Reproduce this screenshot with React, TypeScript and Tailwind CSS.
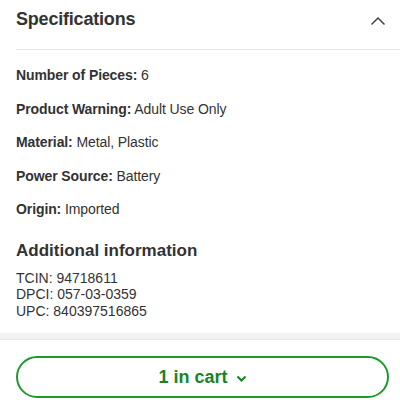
import React from "react";

const rows: [string, string][] = [
  ["Number of Pieces:", "6"],
  ["Product Warning:", "Adult Use Only"],
  ["Material:", "Metal, Plastic"],
  ["Power Source:", "Battery"],
  ["Origin:", "Imported"],
];

export default function App() {
  return (
    <div
      className="w-[400px] h-[400px] overflow-hidden bg-white text-[#333333]"
      style={{ fontFamily: '"Liberation Sans", Arial, sans-serif' }}
    >
      <div className="ml-[16px] h-[50px] border-b border-[#e4e4e4] flex items-start justify-between pt-[7px]">
        <div className="text-[18px] leading-[24px] font-bold tracking-[-0.2px] text-[#333333]">
          Specifications
        </div>
        <svg width="16" height="10" viewBox="0 0 16 10" className="mt-[9px] mr-[14px]">
          <path d="M1.5 8.5 L8 2 L14.5 8.5" fill="none" stroke="#444" strokeWidth="1.5" />
        </svg>
      </div>
      <div className="px-[16px] pt-[9px]">
        {rows.map(([k, v]) => (
          <div key={k} className="text-[14px] leading-[33.5px] tracking-[-0.1px]">
            <span className="font-bold">{k}</span> {v}
          </div>
        ))}
        <div className="mt-[12.5px] text-[17px] leading-[24px] font-bold">Additional information</div>
        <div className="mt-[6.5px] text-[14px] leading-[16.5px]">
          <div>TCIN: 94718611</div>
          <div>DPCI: 057-03-0359</div>
          <div>UPC: 840397516865</div>
        </div>
      </div>
      <div className="mt-[14px] h-[7px] bg-[#f2f2f2] border-b border-[#e6e6e6]"></div>
      <div className="pl-[16px] pr-[11px] pt-[16px]">
        <button className="w-full h-[42px] rounded-full border-2 border-[#1f9a2a] flex items-center justify-center gap-[8px] text-[#17851f]">
          <span className="text-[18px] font-bold">1 in cart</span>
          <svg width="11" height="7" viewBox="0 0 11 7" className="mt-[2px]">
            <path d="M1.5 1.5 L5.5 5.5 L9.5 1.5" fill="none" stroke="#17851f" strokeWidth="2" />
          </svg>
        </button>
      </div>
    </div>
  );
}
